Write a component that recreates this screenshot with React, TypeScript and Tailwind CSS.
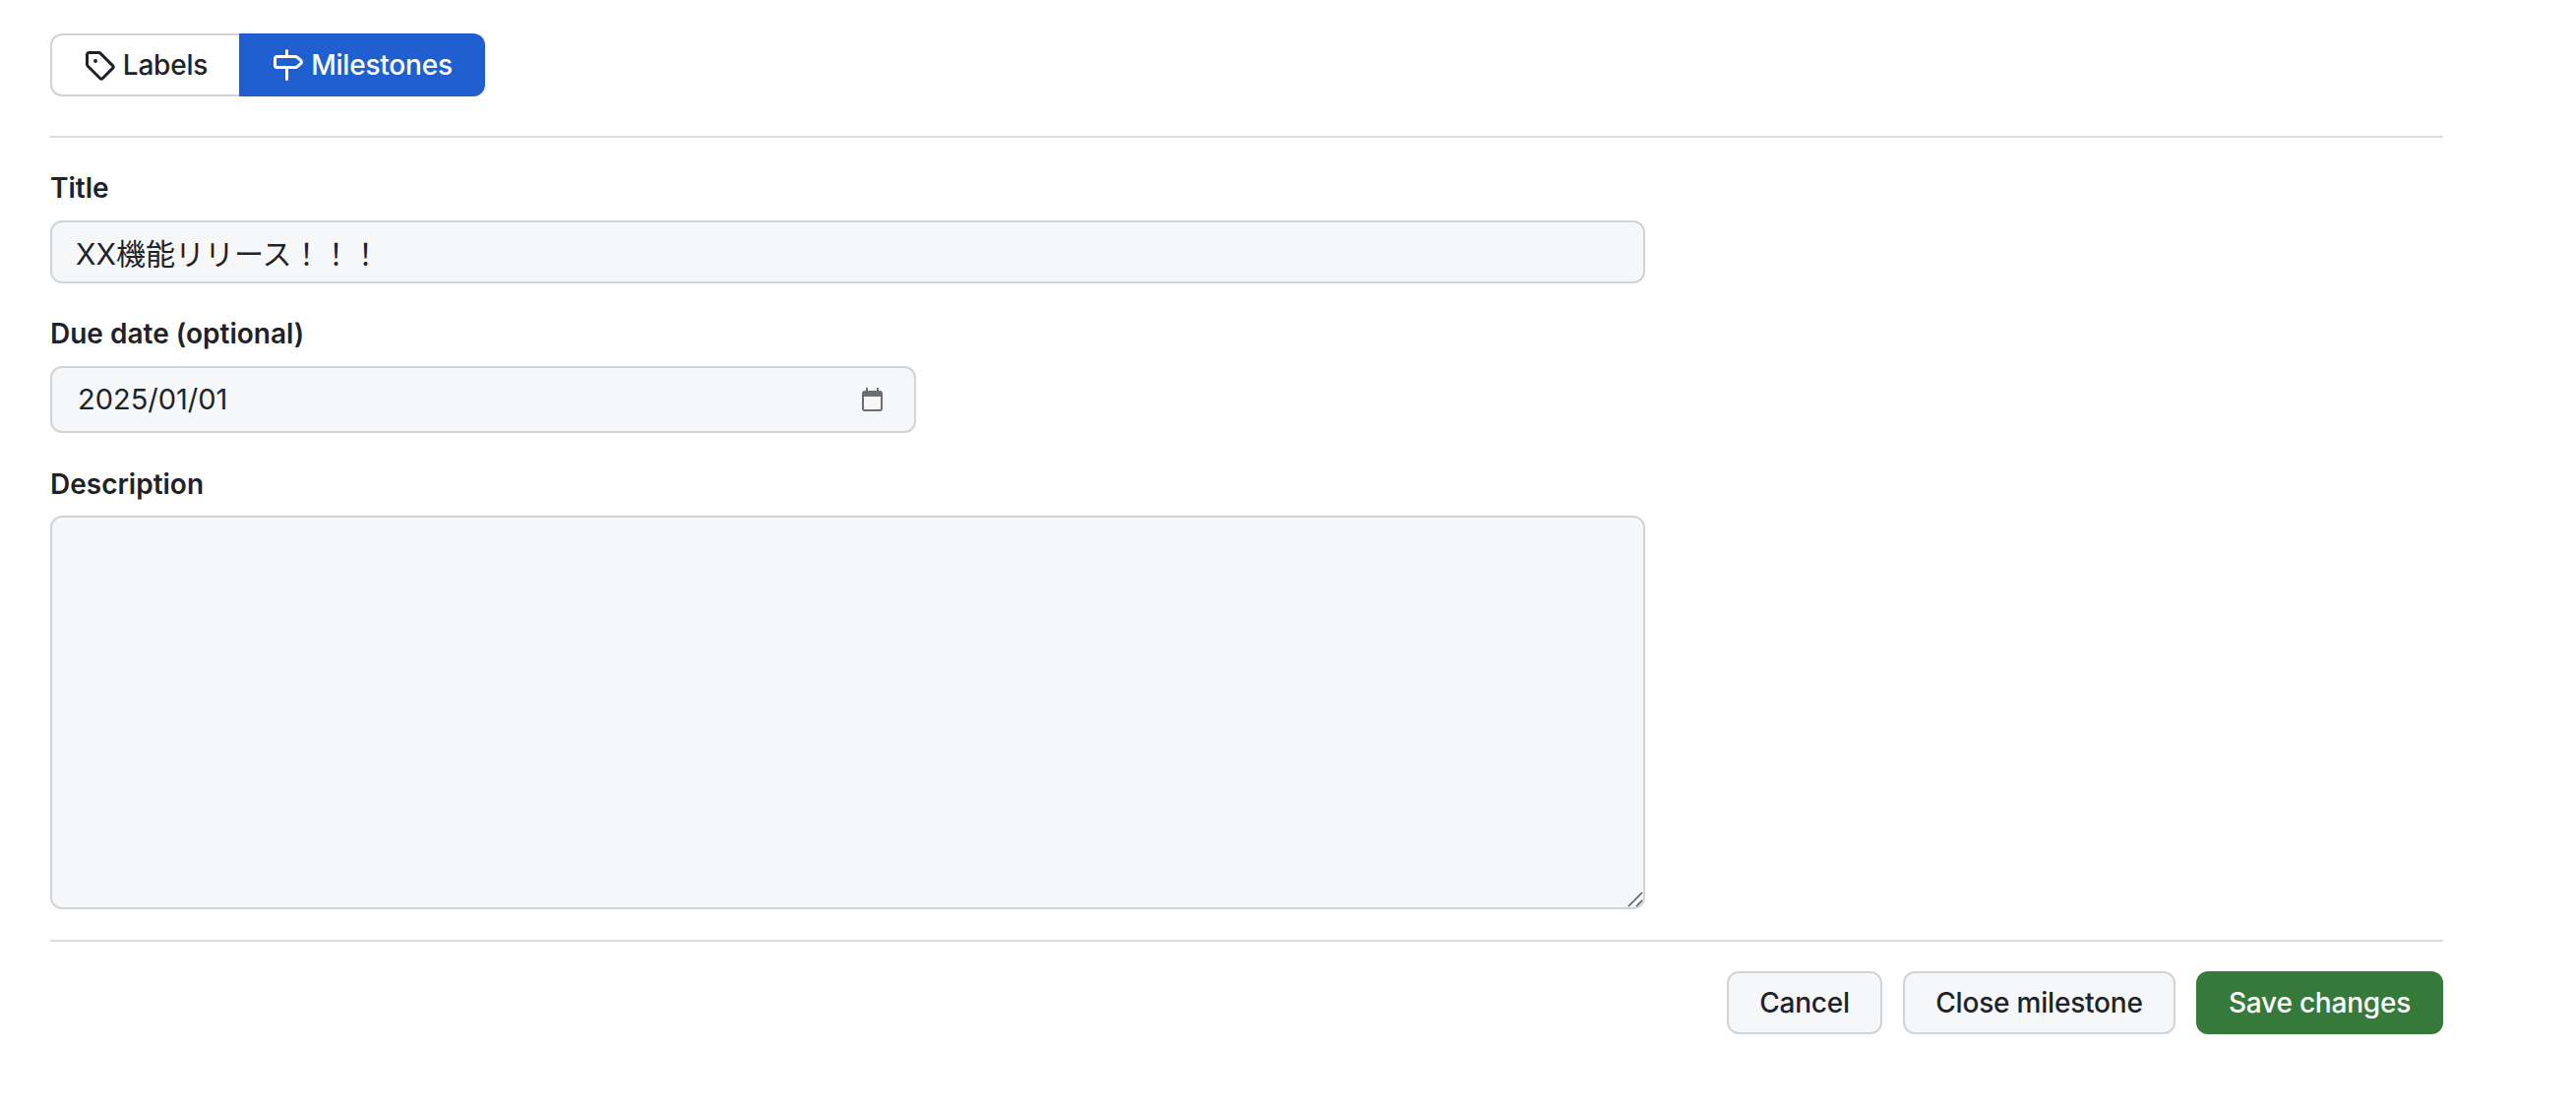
const labelClass = "block h-10 text-[28px] leading-10 font-semibold text-[#1f2328]";
const fieldClass = "rounded-xl border-2 border-[#cfd4d9] bg-[#f5f7f8] text-[#1f2328]";

function TagIcon() {
  return (
    <svg viewBox="0 0 16 16" fill="currentColor" className="h-8 w-8 shrink-0">
      <path d="M1 7.775V2.75C1 1.784 1.784 1 2.75 1h5.025c.464 0 .91.184 1.238.513l6.25 6.25a1.75 1.75 0 0 1 0 2.474l-5.026 5.026a1.75 1.75 0 0 1-2.474 0l-6.25-6.25A1.752 1.752 0 0 1 1 7.775Zm1.5 0c0 .066.026.13.073.177l6.25 6.25a.25.25 0 0 0 .354 0l5.025-5.025a.25.25 0 0 0 0-.354l-6.25-6.25a.25.25 0 0 0-.177-.073H2.75a.25.25 0 0 0-.25.25ZM6 5a1 1 0 1 1 0 2 1 1 0 0 1 0-2Z" />
    </svg>
  );
}

function MilestoneIcon() {
  return (
    <svg viewBox="0 0 16 16" fill="currentColor" className="h-8 w-8 shrink-0">
      <path d="M7.75 0a.75.75 0 0 1 .75.75V3h3.634c.414 0 .814.147 1.13.414l2.07 1.75a1.75 1.75 0 0 1 0 2.672l-2.07 1.75a1.75 1.75 0 0 1-1.13.414H8.5v5.25a.75.75 0 0 1-1.5 0V10H2.75A1.75 1.75 0 0 1 1 8.25v-3.5C1 3.784 1.784 3 2.75 3H7V.75A.75.75 0 0 1 7.75 0Zm4.384 8.5a.25.25 0 0 0 .161-.06l2.07-1.75a.25.25 0 0 0 0-.38l-2.07-1.75a.25.25 0 0 0-.161-.06H2.75a.25.25 0 0 0-.25.25v3.5c0 .138.112.25.25.25h9.384Z" />
    </svg>
  );
}

function CalendarIcon() {
  return (
    <svg viewBox="0 0 21 24" className="h-6 w-[21px] shrink-0 text-[#6e6e6e]" fill="currentColor">
      <path d="M4 0h2v3h9V0h2v3h1a3 3 0 0 1 3 3v15a3 3 0 0 1-3 3H3a3 3 0 0 1-3-3V6a3 3 0 0 1 3-3h1V0Zm-2 9v12a1 1 0 0 0 1 1h15a1 1 0 0 0 1-1V9H2Z" />
    </svg>
  );
}

export default function App() {
  return (
    <div
      className="min-h-[1128px] w-[2618px] bg-white pt-[34px] pr-[135px] pl-[51px] text-[#1f2328]"
      style={{ fontFamily: 'Inter, "Noto Sans CJK JP", sans-serif' }}
    >
      <div className="flex h-16 text-[28px] font-medium tracking-[-0.2px]">
        <button className="flex w-[192px] items-center justify-center gap-2 rounded-l-xl border-2 border-r-0 border-[#cfd4d9] bg-white">
          <TagIcon />
          Labels
        </button>
        <button className="flex w-[250px] items-center justify-center gap-2 rounded-r-xl bg-[#1f5fd0] text-white">
          <MilestoneIcon />
          Milestones
        </button>
      </div>

      <div className="mt-10 h-0.5 bg-[#d8dee4]" />

      <form className="mt-[31px]">
        <label className={labelClass}>Title</label>
        <input
          readOnly
          value="XX機能リリース！！！"
          className={`mt-[13px] block h-16 w-[1621px] px-6 text-[30px] outline-none ${fieldClass}`}
        />

        <label className={`mt-[31px] ${labelClass}`}>Due date (optional)</label>
        <div className={`mt-[13px] flex h-[68px] w-[880px] items-center justify-between pr-8 pl-[26px] text-[29px] ${fieldClass}`}>
          <span>2025/01/01</span>
          <CalendarIcon />
        </div>

        <label className={`mt-8 ${labelClass}`}>Description</label>
        <div className="relative mt-3 h-[400px] w-[1621px]">
          <textarea readOnly className={`block h-full w-full resize-none outline-none ${fieldClass}`} />
          <svg viewBox="0 0 16 16" className="absolute right-0.5 bottom-0.5 h-4 w-4 text-[#555]" stroke="currentColor" strokeWidth="1.5">
            <path d="M1 15 15 1M9 15l6-6" />
          </svg>
        </div>
      </form>

      <div className="mt-[31px] h-0.5 bg-[#d8dee4]" />

      <div className="mt-[30px] flex h-16 justify-end gap-[21px] text-[28px] font-medium tracking-[-0.2px]">
        <button className="w-[158px] rounded-xl border-2 border-[#cfd4d9] bg-[#f5f7f8]">Cancel</button>
        <button className="w-[277px] rounded-xl border-2 border-[#cfd4d9] bg-[#f5f7f8]">Close milestone</button>
        <button className="w-[251px] rounded-xl bg-[#367a3b] text-white">Save changes</button>
      </div>
    </div>
  );
}
